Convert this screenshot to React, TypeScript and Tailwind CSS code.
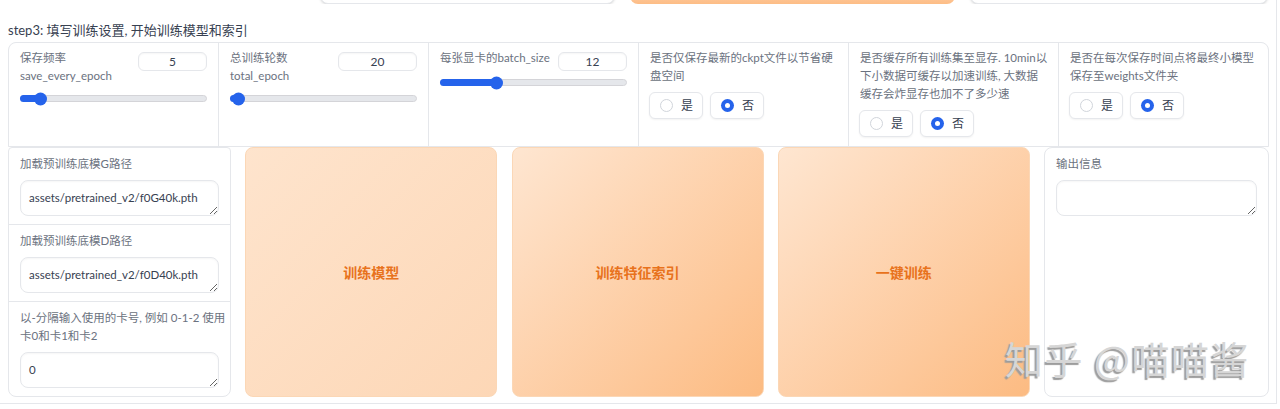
import React from 'react';

const font = "font-['Lato','Noto_Sans_CJK_SC',sans-serif]";

function Slider({ pos }: { pos: number }) {
  return (
    <div className="relative h-[7px] rounded-full bg-[#e5e7eb] border border-[#d4d4d8]">
      <div
        className="absolute left-[-1px] top-[-1px] h-[7px] rounded-full bg-[#2563eb]"
        style={{ width: pos }}
      />
      <div
        className="absolute top-1/2 -translate-y-1/2 w-[13px] h-[13px] rounded-full bg-[#2563eb]"
        style={{ left: pos - 7 }}
      />
    </div>
  );
}

function NumberField({
  label,
  sub,
  value,
  boxW,
  pos,
  sliderMt,
}: {
  label: string;
  sub?: string;
  value: string;
  boxW: string;
  pos: number;
  sliderMt: string;
}) {
  return (
    <div className="bg-white px-[11px] pt-[6px] pb-[9px]">
      <div className="flex justify-between">
        <div className="text-[11.5px] leading-[18px] text-[#6b7280] whitespace-nowrap">
          <div>{label}</div>
          {sub && <div>{sub}</div>}
        </div>
        <div
          className={`${boxW} mt-[3px] h-[19px] rounded-md border border-[#e5e7eb] shadow-[inset_0_1px_2px_rgba(0,0,0,0.04)] flex items-center justify-center text-[12px] text-[#374151]`}
        >
          {value}
        </div>
      </div>
      <div className={sliderMt}>
        <Slider pos={pos} />
      </div>
    </div>
  );
}

function Radio({ label, checked }: { label: string; checked?: boolean }) {
  return (
    <div className="h-[27px] flex items-center gap-[8px] pl-[10px] pr-[9px] rounded-md border border-[#e5e7eb] bg-white shadow-[0_1px_2px_rgba(0,0,0,0.05)]">
      {checked ? (
        <span className="w-[13px] h-[13px] rounded-full bg-[#2563eb] flex items-center justify-center">
          <span className="w-[5px] h-[5px] rounded-full bg-white" />
        </span>
      ) : (
        <span className="w-[13px] h-[13px] rounded-full border border-[#d1d5db] bg-white" />
      )}
      <span className="text-[12px] text-[#374151]">{label}</span>
    </div>
  );
}

function RadioField({ lines }: { lines: string[] }) {
  return (
    <div className="bg-white px-[10px] pt-[6px] pb-[9px]">
      <div className="pl-px text-[11.5px] leading-[18px] text-[#6b7280] whitespace-nowrap">
        {lines.map((l) => (
          <div key={l}>{l}</div>
        ))}
      </div>
      <div className="mt-[7px] flex gap-[7px]">
        <Radio label="是" />
        <Radio label="否" checked />
      </div>
    </div>
  );
}

function TextBlock({ lines, value, last }: { lines: string[]; value: string; last?: boolean }) {
  return (
    <div className={`px-[11px] pt-[7px] pb-[8px] ${last ? '' : 'border-b border-[#e5e7eb]'}`}>
      <div className="text-[11.5px] leading-[18px] text-[#6b7280] whitespace-nowrap">
        {lines.map((l) => (
          <div key={l}>{l}</div>
        ))}
      </div>
      <textarea
        readOnly
        wrap="off"
        defaultValue={value}
        className="mt-[7px] block w-full h-[36px] overflow-hidden rounded-lg border border-[#e5e7eb] px-[8px] py-[8px] text-[11.5px] leading-[18px] text-[#374151] shadow-[inset_0_1px_2px_rgba(0,0,0,0.04)] outline-none"
      />
    </div>
  );
}

const buttons = [
  { label: '训练模型', bg: 'from-[#fee4cd] to-[#fdd7b6]' },
  { label: '训练特征索引', bg: 'from-[#fee6d1] to-[#fcbb82]' },
  { label: '一键训练', bg: 'from-[#fee6d1] to-[#fcbb82]' },
];

export default function App() {
  return (
    <div className={`${font} bg-white w-[1280px] h-[409px] overflow-hidden`}>
      <div className="relative w-[1277px] border-r border-b border-[#e5e7eb] pb-[6px]">
        {/* tail of the previous row */}
        <div className="h-[4px] overflow-hidden flex items-end">
          <div className="ml-[320px] w-[295px] h-[30px] shrink-0 rounded-lg border border-[#e5e7eb] bg-white shadow-sm" />
          <div className="ml-[15px] w-[325px] h-[30px] shrink-0 rounded-lg bg-linear-to-b from-[#fee2c9] to-[#fdbd86]" />
          <div className="ml-[15px] w-[298px] h-[30px] shrink-0 rounded-lg border border-[#e5e7eb] bg-white shadow-sm" />
        </div>

        <div className="mt-[17px] mb-[3px] pl-[8px] text-[13px] leading-[18px] text-[#374151]">
          step3: 填写训练设置, 开始训练模型和索引
        </div>

        <div className="ml-[8px] w-[1261px]">
          <div className="grid grid-cols-6 gap-px bg-[#e5e7eb] border border-[#e5e7eb] rounded-t-lg overflow-hidden">
            <NumberField label="保存频率" sub="save_every_epoch" value="5" boxW="w-[69px]" pos={20} sliderMt="mt-[10px]" />
            <NumberField label="总训练轮数" sub="total_epoch" value="20" boxW="w-[79px]" pos={8} sliderMt="mt-[10px]" />
            <NumberField label="每张显卡的batch_size" value="12" boxW="w-[69px]" pos={56} sliderMt="mt-[8px]" />
            <RadioField lines={['是否仅保存最新的ckpt文件以节省硬', '盘空间']} />
            <RadioField
              lines={['是否缓存所有训练集至显存. 10min以', '下小数据可缓存以加速训练, 大数据', '缓存会炸显存也加不了多少速']}
            />
            <RadioField lines={['是否在每次保存时间点将最终小模型', '保存至weights文件夹']} />
          </div>

          <div className="flex justify-between">
            <div className="w-[223px] rounded-b-lg rounded-t-sm border border-[#e5e7eb] bg-white">
              <TextBlock lines={['加载预训练底模G路径']} value="assets/pretrained_v2/f0G40k.pth" />
              <TextBlock lines={['加载预训练底模D路径']} value="assets/pretrained_v2/f0D40k.pth" />
              <TextBlock lines={['以-分隔输入使用的卡号, 例如 0-1-2 使用', '卡0和卡1和卡2']} value="0" last />
            </div>
            {buttons.map((b) => (
              <button
                key={b.label}
                className={`w-[252px] rounded-lg border border-[#fbd7b6] bg-linear-to-br ${b.bg} text-[14px] font-semibold text-[#e8721c] flex items-center justify-center`}
              >
                {b.label}
              </button>
            ))}
            <div className="w-[225px] rounded-lg border border-[#e5e7eb] bg-white">
              <TextBlock lines={['输出信息']} value="" last />
            </div>
          </div>
        </div>

        {/* watermark */}
        <div className="absolute left-[1005px] top-[334px] text-[38px] leading-[48px] tracking-[1.5px] text-[#d6d6d6] whitespace-nowrap font-['Noto_Sans_CJK_SC',sans-serif] [text-shadow:-2px_2px_1px_#9c9c9c]">
          知乎 @喵喵酱
        </div>
      </div>
    </div>
  );
}
